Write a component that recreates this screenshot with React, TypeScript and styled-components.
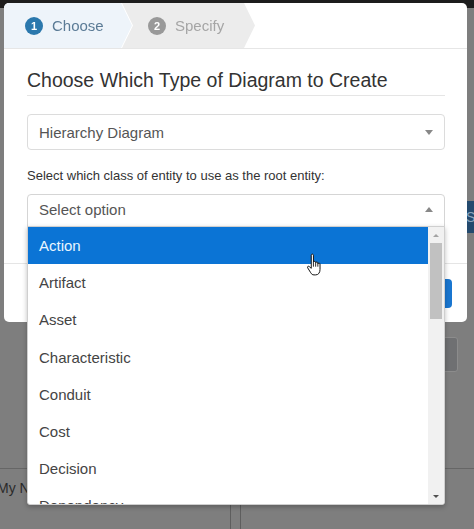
import React from "react";
import styled, { createGlobalStyle } from "styled-components";

const GlobalStyle = createGlobalStyle`
  html, body {
    margin: 0;
    padding: 0;
    background: #7e7e7e;
  }
  body {
    font-family: "Liberation Sans", Arial, sans-serif;
  }
`;

const items = [
  "Action",
  "Artifact",
  "Asset",
  "Characteristic",
  "Conduit",
  "Cost",
  "Decision",
  "Dependency",
];

const Page = styled.div`
  position: relative;
  width: 474px;
  height: 529px;
  overflow: hidden;
  background: #7e7e7e;
`;

// dimmed application behind the modal
const BackPage = styled.div`
  display: flex;
  flex-direction: column;
  height: 100%;
`;

const TopBar = styled.div`
  height: 8px;
  background: #1d1d1d;
`;

const BackRow = styled.div<{ $top: number; $h: number }>`
  display: flex;
  justify-content: flex-end;
  margin-top: ${(p) => p.$top}px;
  height: ${(p) => p.$h}px;
`;

const BackBlueButton = styled.div`
  width: 40px;
  margin-right: -32px;
  background: #244a6e;
  border-radius: 3px 0 0 3px;
  color: #8aa4bd;
  font-size: 14px;
  line-height: 32px;
  padding-left: 2px;
`;

const BackGrayButton = styled.div`
  width: 40px;
  margin-right: 16px;
  background: #6f7072;
  border: 1px solid #8c8c8c;
  border-radius: 3px;
  box-sizing: border-box;
`;

const BackTable = styled.div`
  margin-top: 96px;
  flex: 1;
  display: grid;
  grid-template-columns: 230px 11px 1fr;
  border-top: 1px solid #666;
`;

const BackCell = styled.div<{ $divider?: boolean }>`
  border-left: ${(p) => (p.$divider ? "1px solid #5e5e5e" : "none")};
  border-right: ${(p) => (p.$divider ? "1px solid #5e5e5e" : "none")};
  color: #2a2a2a;
  font-size: 14px;
  padding: 11px 0 0 0;
  margin-left: ${(p) => (p.$divider ? "0" : "-3px")};
`;

const Modal = styled.div`
  position: absolute;
  top: 3px;
  left: 4px;
  width: 463px;
  background: #fff;
  border-radius: 5px;
  display: flex;
  flex-direction: column;
`;

const Steps = styled.div`
  display: flex;
  height: 45px;
  border-bottom: 1px solid #e6e6e6;
`;

const StepWrap = styled.div<{ $z: number; $overlap?: boolean }>`
  position: relative;
  z-index: ${(p) => p.$z};
  margin-left: ${(p) => (p.$overlap ? "-10px" : "0")};
  filter: drop-shadow(1px 0 0 #ffffff);
`;

const Step = styled.div<{ $active?: boolean; $w: number; $pl: number }>`
  display: flex;
  align-items: center;
  gap: 9px;
  height: 45px;
  width: ${(p) => p.$w}px;
  padding-left: ${(p) => p.$pl}px;
  box-sizing: border-box;
  background: ${(p) => (p.$active ? "#eef4fa" : "#ececec")};
  border-top-left-radius: ${(p) => (p.$active ? "5px" : "0")};
  clip-path: polygon(0 0, calc(100% - 11px) 0, 100% 50%, calc(100% - 11px) 100%, 0 100%);
`;

const StepNum = styled.span<{ $active?: boolean }>`
  width: 18px;
  height: 18px;
  border-radius: 50%;
  background: ${(p) => (p.$active ? "#2b78ad" : "#999")};
  color: #fff;
  font-size: 11px;
  font-weight: bold;
  display: flex;
  align-items: center;
  justify-content: center;
`;

const StepLabel = styled.span<{ $active?: boolean }>`
  font-size: 15px;
  color: ${(p) => (p.$active ? "#5b7b96" : "#a5a5a5")};
`;

const Body = styled.div`
  padding: 0 22px 0 23px;
  display: flex;
  flex-direction: column;
`;

const Title = styled.h4`
  margin: 20px 0 0;
  padding-bottom: 4px;
  font-size: 19.5px;
  line-height: 22px;
  font-weight: normal;
  color: #333;
  border-bottom: 1px solid #e5e5e5;
`;

const SelectBox = styled.div<{ $open?: boolean; $top: number; $h: number }>`
  position: relative;
  margin-top: ${(p) => p.$top}px;
  height: ${(p) => p.$h}px;
  box-sizing: border-box;
  border: 1px solid ${(p) => (p.$open ? "#d5d5d5" : "#dcdcdc")};
  border-radius: ${(p) => (p.$open ? "4px 4px 0 0" : "4px")};
  display: flex;
  align-items: center;
  justify-content: space-between;
  padding: 0 11px ${(p) => (p.$open ? "3px" : "0")} 11px;
  font-size: 15px;
  color: #555;
`;

const Caret = styled.span<{ $up?: boolean }>`
  width: 0;
  height: 0;
  border-left: 4px solid transparent;
  border-right: 4px solid transparent;
  ${(p) =>
    p.$up ? "border-bottom: 5px solid #888;" : "border-top: 5px solid #888;"}
`;

const Label = styled.div`
  margin-top: 18px;
  font-size: 13px;
  line-height: 16px;
  color: #333;
`;

const Dropdown = styled.div`
  position: absolute;
  top: calc(100% - 1px);
  left: -1px;
  right: -1px;
  height: 279px;
  box-sizing: border-box;
  background: #fff;
  border: 1px solid #cfcfcf;
  border-radius: 0 0 3px 3px;
  box-shadow: 0 2px 5px rgba(0, 0, 0, 0.25);
  display: flex;
  overflow: hidden;
  z-index: 5;
`;

const Options = styled.div`
  flex: 1;
  display: flex;
  flex-direction: column;
`;

const Option = styled.div<{ $hl?: boolean }>`
  flex: 0 0 37.2px;
  display: flex;
  align-items: center;
  padding-left: 11px;
  font-size: 15px;
  color: ${(p) => (p.$hl ? "#e9f6ff" : "#444")};
  background: ${(p) => (p.$hl ? "#0b74d5" : "transparent")};
`;

const ScrollBar = styled.div`
  width: 16px;
  background: #f1f1f1;
  display: flex;
  flex-direction: column;
`;

const ScrollArrow = styled.div<{ $up?: boolean }>`
  height: 16px;
  display: flex;
  align-items: center;
  justify-content: center;
  &::after {
    content: "";
    border-left: 3px solid transparent;
    border-right: 3px solid transparent;
    ${(p) =>
      p.$up
        ? "border-bottom: 3px solid #a3a3a3;"
        : "border-top: 3px solid #505050;"}
  }
`;

const Thumb = styled.div`
  height: 76px;
  margin: 0 2px;
  background: #c1c1c1;
`;

const Spacer = styled.div`
  flex: 1;
`;

const Footer = styled.div`
  margin-top: 35px;
  border-top: 1px solid #e5e5e5;
  padding: 15px 15px 14px;
  display: flex;
  justify-content: flex-end;
`;

const PrimaryButton = styled.div`
  width: 70px;
  height: 29px;
  background: #1976d0;
  border-radius: 4px;
`;

const Cursor = styled.svg`
  position: absolute;
  left: 306px;
  top: 253px;
  z-index: 10;
`;

export default function App() {
  return (
    <Page>
      <GlobalStyle />
      <BackPage>
        <TopBar />
        <BackRow $top={193} $h={32}>
          <BackBlueButton>S</BackBlueButton>
        </BackRow>
        <BackRow $top={104} $h={35}>
          <BackGrayButton />
        </BackRow>
        <BackTable>
          <BackCell>My N</BackCell>
          <BackCell $divider />
          <BackCell />
        </BackTable>
      </BackPage>

      <Modal>
        <Steps>
          <StepWrap $z={2}>
            <Step $active $w={128} $pl={21}>
              <StepNum $active>1</StepNum>
              <StepLabel $active>Choose</StepLabel>
            </Step>
          </StepWrap>
          <StepWrap $z={1} $overlap>
            <Step $w={133} $pl={26}>
              <StepNum>2</StepNum>
              <StepLabel>Specify</StepLabel>
            </Step>
          </StepWrap>
        </Steps>
        <Body>
          <Title>Choose Which Type of Diagram to Create</Title>
          <SelectBox $top={18} $h={36}>
            Hierarchy Diagram
            <Caret />
          </SelectBox>
          <Label>Select which class of entity to use as the root entity:</Label>
          <SelectBox $open $top={10} $h={34}>
            Select option
            <Caret $up />
            <Dropdown>
              <Options>
                {items.map((it, i) => (
                  <Option key={it} $hl={i === 0}>
                    {it}
                  </Option>
                ))}
              </Options>
              <ScrollBar>
                <ScrollArrow $up />
                <Thumb />
                <Spacer />
                <ScrollArrow />
              </ScrollBar>
            </Dropdown>
          </SelectBox>
        </Body>
        <Footer>
          <PrimaryButton />
        </Footer>
      </Modal>

      <Cursor width="16" height="23" viewBox="0 0 14 21">
        <path
          d="M4.5 2 C4.5 0.7 6.5 0.7 6.5 2 L6.5 8.5 C6.5 7.4 8.5 7.4 8.5 8.5 L8.5 9 C8.5 8 10.5 8 10.5 9 L10.5 10 C10.5 9 12.5 9 12.5 10 L12.5 15 C12.5 18 11 20 8.5 20 L7 20 C5.5 20 4.8 19.3 4 18 L1.2 13.5 C0.6 12.5 1.8 11.6 2.7 12.4 L4.5 14 Z"
          fill="#fff"
          stroke="#111"
          strokeWidth="0.9"
          strokeLinejoin="round"
        />
        <path d="M6.5 8.5 V12.5 M8.5 9 V12.5 M10.5 10 V12.5" stroke="#111" strokeWidth="0.8" fill="none" />
      </Cursor>
    </Page>
  );
}
